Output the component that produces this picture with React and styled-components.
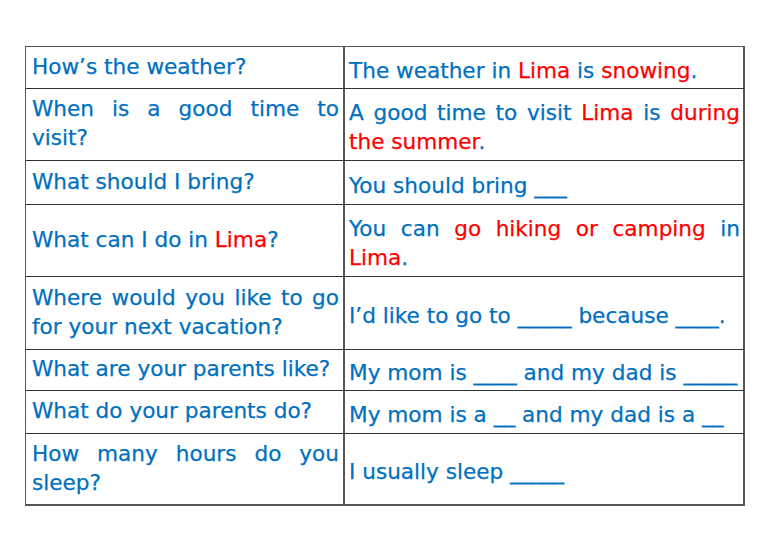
import React from "react";
import styled, { createGlobalStyle } from "styled-components";

const Global = createGlobalStyle`
  html, body { margin: 0; padding: 0; background: #fff; }
  body { font-family: "DejaVu Sans", Verdana, sans-serif; }
`;

const Page = styled.div`
  width: 768px;
  height: 544px;
  padding: 46px 0 0 25px;
  box-sizing: border-box;
`;

const Table = styled.div`
  display: grid;
  grid-template-columns: 317px 401px;
  width: 720px;
  border: 1px solid #555;
  border-right-width: 2px;
  border-bottom-width: 2px;
  box-sizing: border-box;
`;

const Cell = styled.div`
  display: flex;
  align-items: center;
  box-sizing: border-box;
  min-height: ${(p) => p.$h}px;
  padding: ${(p) => (p.$right ? "5px 4px 0 4px" : "1px 4px 4px 6px")};
  border-top: ${(p) => (p.$first ? "none" : "1px solid #333")};
  border-left: ${(p) => (p.$right ? "2px solid #555" : "none")};
  font-size: 21.6px;
  line-height: 29px;
  color: #0070c0;
  -webkit-text-stroke: 0.25px #0070c0;
`;

const Text = styled.div`
  width: 100%;
  text-align: justify;
`;

const Red = styled.span`
  color: #ff0000;
  -webkit-text-stroke: 0.25px #ff0000;
`;

const rows = [
  {
    h: 41,
    q: <>How’s the weather?</>,
    a: (
      <>
        The weather in <Red>Lima</Red> is <Red>snowing</Red>.
      </>
    ),
  },
  {
    h: 72,
    q: <>When is a good time to visit?</>,
    a: (
      <>
        A good time to visit <Red>Lima</Red> is <Red>during the summer</Red>.
      </>
    ),
  },
  { h: 44, q: <>What should I bring?</>, a: <>You should bring ___</> },
  {
    h: 72,
    q: (
      <>
        What can I do in <Red>Lima</Red>?
      </>
    ),
    a: (
      <>
        You can <Red>go hiking or camping</Red> in <Red>Lima</Red>.
      </>
    ),
  },
  {
    h: 73,
    q: <>Where would you like to go for your next vacation?</>,
    a: <>I’d like to go to _____ because ____.</>,
  },
  {
    h: 41,
    q: <>What are your parents like?</>,
    a: <>My mom is ____ and my dad is _____</>,
  },
  {
    h: 43,
    q: <>What do your parents do?</>,
    a: <>My mom is a __ and my dad is a __</>,
  },
  {
    h: 71,
    q: <>How many hours do you sleep?</>,
    a: <>I usually sleep _____</>,
  },
];

export default function App() {
  return (
    <Page>
      <Global />
      <Table>
        {rows.map((r, i) => (
          <React.Fragment key={i}>
            <Cell $h={r.h} $first={i === 0}>
              <Text>{r.q}</Text>
            </Cell>
            <Cell $h={r.h} $first={i === 0} $right>
              <Text>{r.a}</Text>
            </Cell>
          </React.Fragment>
        ))}
      </Table>
    </Page>
  );
}
